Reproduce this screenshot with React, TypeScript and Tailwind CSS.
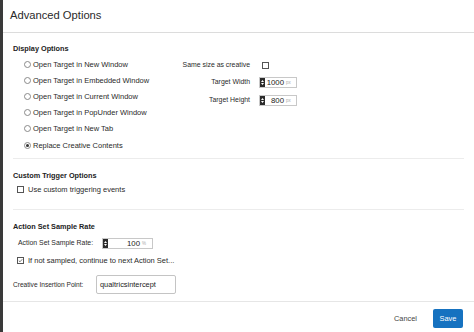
import React from "react";

const font = { fontFamily: '"Liberation Sans", Arial, sans-serif' };

function Radio({ label, checked }: { label: string; checked?: boolean }) {
  return (
    <div className="flex h-[16.2px] items-center">
      <span className="flex h-[7px] w-[7px] items-center justify-center rounded-full border border-[#8a8a8a] bg-white">
        {checked && <span className="h-[3px] w-[3px] rounded-full bg-[#333]" />}
      </span>
      <span className="ml-[2px] text-[7.5px] leading-[9px] text-[#2a2a2a]">{label}</span>
    </div>
  );
}

function Box({ checked }: { checked?: boolean }) {
  return (
    <span className="flex h-[7px] w-[7px] items-center justify-center border border-[#555] bg-white">
      {checked && (
        <svg width="5" height="5" viewBox="0 0 10 10">
          <path d="M1.5 5.2 L4 7.6 L8.6 2.4" fill="none" stroke="#444" strokeWidth="1.4" />
        </svg>
      )}
    </span>
  );
}

function Spinner({ value, unit, w }: { value: string; unit: string; w: string }) {
  return (
    <div className={`flex h-[11px] ${w} items-stretch border border-[#c8c8c8] bg-white`}>
      <div className="flex w-[5px] flex-col items-center justify-center gap-[1px] bg-[#2b2b2b]">
        <svg width="3" height="2" viewBox="0 0 3 2">
          <path d="M0 2 L1.5 0 L3 2 Z" fill="#fff" />
        </svg>
        <svg width="3" height="2" viewBox="0 0 3 2">
          <path d="M0 0 L1.5 2 L3 0 Z" fill="#fff" />
        </svg>
      </div>
      <div className="flex flex-1 items-center justify-end pr-[2px]">
        <span className="text-[7.8px] leading-[9px] text-[#1a1a1a]">{value}</span>
        <span className="ml-[2px] w-[8px] text-[4.5px] leading-[9px] text-[#aaa]">{unit}</span>
      </div>
    </div>
  );
}

function SectionTitle({ children, className }: { children: React.ReactNode; className?: string }) {
  return <h3 className={`text-[7.3px] font-bold leading-[9px] text-[#222] ${className ?? ""}`}>{children}</h3>;
}

export default function App() {
  const radios = [
    "Open Target in New Window",
    "Open Target in Embedded Window",
    "Open Target in Current Window",
    "Open Target in PopUnder Window",
    "Open Target in New Tab",
  ];

  return (
    <div style={font} className="flex h-[332px] w-[474px] flex-col overflow-hidden border-l-[3px] border-[#3a3a3a] bg-white">
      <div className="flex h-[33px] items-center border-b border-[#dcdcdc] pl-[7px] pb-[1px]">
        <h2 className="text-[11.2px] text-[#2a2a2a]">Advanced Options</h2>
      </div>

      <div className="flex flex-1 flex-col px-[10px]">
        <SectionTitle className="mt-[11px]">Display Options</SectionTitle>

        <div className="mt-[3px] flex">
          <div className="w-[157px] pl-[11px]">
            {radios.map((r) => (
              <Radio key={r} label={r} />
            ))}
            <Radio label="Replace Creative Contents" checked />
          </div>
          <div className="flex flex-col pt-[1px] text-[6.9px] text-[#2a2a2a]">
            <div className="flex h-[16px] items-center">
              <span className="w-[80px] text-right">Same size as creative</span>
              <span className="ml-[12px]">
                <Box />
              </span>
            </div>
            <div className="flex h-[18px] items-center">
              <span className="w-[80px] text-right">Target Width</span>
              <span className="ml-[9px]">
                <Spinner value="1000" unit="px" w="w-[38px]" />
              </span>
            </div>
            <div className="flex h-[18px] items-center">
              <span className="w-[80px] text-right">Target Height</span>
              <span className="ml-[9px]">
                <Spinner value="800" unit="px" w="w-[38px]" />
              </span>
            </div>
          </div>
        </div>

        <div className="mt-[5px] h-px bg-[#ececec]" />

        <SectionTitle className="mt-[12px]">Custom Trigger Options</SectionTitle>
        <div className="mt-[3px] flex h-[12px] items-center pl-[4px]">
          <Box />
          <span className="ml-[4px] text-[7.5px] text-[#2a2a2a]">Use custom triggering events</span>
        </div>

        <div className="mt-[14px] h-px bg-[#ececec]" />

        <SectionTitle className="mt-[12px]">Action Set Sample Rate</SectionTitle>
        <div className="mt-[6px] flex h-[12px] items-center pl-[5px]">
          <span className="w-[84px] text-[6.9px] text-[#2a2a2a]">Action Set Sample Rate:</span>
          <Spinner value="100" unit="%" w="w-[51px]" />
        </div>
        <div className="mt-[5px] flex h-[12px] items-center pl-[4px]">
          <Box checked />
          <span className="ml-[4px] text-[7.5px] text-[#2a2a2a]">If not sampled, continue to next Action Set...</span>
        </div>
        <div className="mt-[9px] flex h-[19px] items-center">
          <span className="w-[83px] text-[6.6px] text-[#2a2a2a]">Creative Insertion Point:</span>
          <div className="flex h-[19px] w-[80px] items-center rounded-[2px] border border-[#c4c4c4] pl-[3px] text-[7.4px] text-[#1a1a1a]">
            qualtricsintercept
          </div>
        </div>
      </div>

      <div className="flex h-[31px] items-center justify-end border-t border-[#e6e6e6] pr-[11px] pt-[3px]">
        <button className="text-[7.4px] text-[#444]">Cancel</button>
        <button className="ml-[16px] flex h-[19px] w-[30px] items-center justify-center rounded-[2px] bg-[#1672c0] text-[7.4px] text-white">
          Save
        </button>
      </div>
    </div>
  );
}
